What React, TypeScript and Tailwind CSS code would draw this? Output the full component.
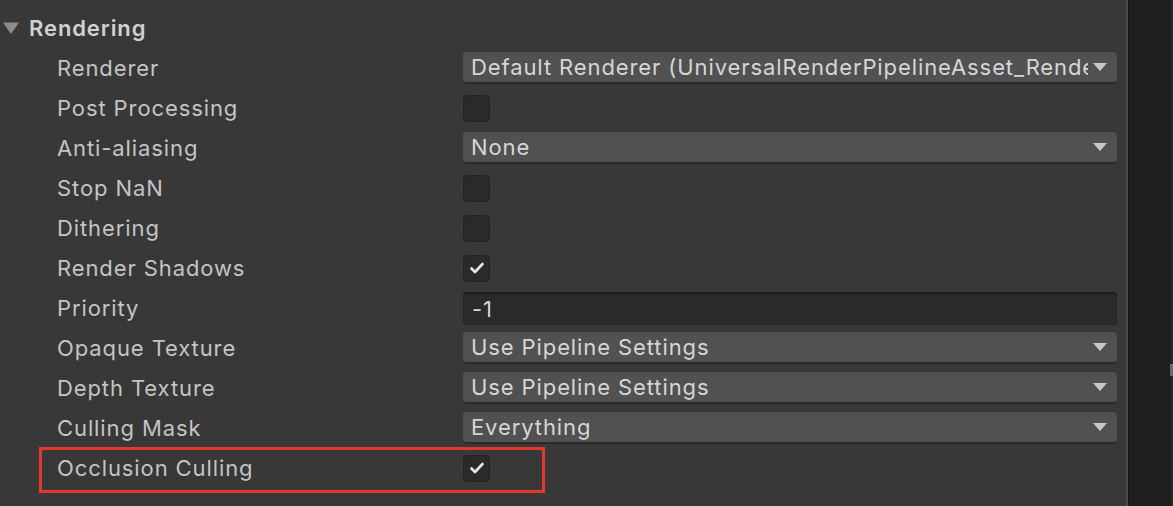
import React from "react";

const Check = () => (
  <svg width="16" height="14" viewBox="0 0 16 14" className="block">
    <path d="M2.5 7.5 L6 11 L13.5 3" fill="none" stroke="#e6e6e6" strokeWidth="2.6" strokeLinecap="round" strokeLinejoin="round" />
  </svg>
);

const Arrow = () => (
  <svg width="16" height="10" viewBox="0 0 16 10" className="block">
    <path d="M1 1 L15 1 L8 9 Z" fill="#c8c8c8" />
  </svg>
);

const Dropdown = ({ value }: { value: string }) => (
  <div className="flex h-[32px] w-full min-w-0 items-center rounded-[4px] bg-[#515151] border-b-2 border-[#2a2a2a] pl-[8px] pr-[9px]">
    <div className="min-w-0 flex-1 overflow-hidden whitespace-nowrap text-[#d6d6d6]">{value}</div>
    <div className="ml-[4px] shrink-0"><Arrow /></div>
  </div>
);

const Checkbox = ({ checked }: { checked?: boolean }) => (
  <div className="flex h-[27px] w-[27px] items-center justify-center rounded-[4px] border border-[#232323] bg-[#2a2a2a]">
    {checked ? <Check /> : null}
  </div>
);

const TextField = ({ value }: { value: string }) => (
  <div className="flex h-[33px] w-full items-center rounded-[4px] bg-[#2a2a2a] border-t-2 border-[#1c1c1c] border-x border-b border-x-[#242424] border-b-[#242424] pl-[8px] text-[#d6d6d6]">
    {value}
  </div>
);

type Row = { label: string; kind: "dd" | "cb" | "tf"; value?: string; checked?: boolean; highlight?: boolean };

const rows: Row[] = [
  { label: "Renderer", kind: "dd", value: "Default Renderer (UniversalRenderPipelineAsset_Renderer)" },
  { label: "Post Processing", kind: "cb" },
  { label: "Anti-aliasing", kind: "dd", value: "None" },
  { label: "Stop NaN", kind: "cb" },
  { label: "Dithering", kind: "cb" },
  { label: "Render Shadows", kind: "cb", checked: true },
  { label: "Priority", kind: "tf", value: "-1" },
  { label: "Opaque Texture", kind: "dd", value: "Use Pipeline Settings" },
  { label: "Depth Texture", kind: "dd", value: "Use Pipeline Settings" },
  { label: "Culling Mask", kind: "dd", value: "Everything" },
  { label: "Occlusion Culling", kind: "cb", checked: true, highlight: true },
];

export default function App() {
  return (
    <div
      className="flex h-[506px] w-[1173px] overflow-hidden bg-[#383838] text-[22px] leading-[26px] tracking-[0.9px]"
      style={{ fontFamily: "Inter, 'Noto Sans', sans-serif" }}
    >
      <div className="w-[1126px] shrink-0 pt-[8px] pr-[9px]">
        <div className="flex h-[40px] items-center">
          <svg width="18" height="14" viewBox="0 0 18 14" className="ml-[2px] mr-[9px] block">
            <path d="M1 1.5 L17 1.5 L9 13 Z" fill="#8c8c8c" />
          </svg>
          <span className="font-semibold text-[#d0d0d0]">Rendering</span>
        </div>
        {rows.map((r) => (
          <div key={r.label} className="relative flex h-[40px] items-center">
            {r.highlight ? (
              <div className="pointer-events-none absolute left-[39px] top-[-1px] h-[46px] w-[506px] border-[3px] border-[#e5372a]" />
            ) : null}
            <div className="w-[463px] shrink-0 pl-[57px] text-[#c4c4c4]">{r.label}</div>
            <div className="flex min-w-0 flex-1 items-center">
              {r.kind === "dd" ? <Dropdown value={r.value!} /> : null}
              {r.kind === "cb" ? <Checkbox checked={r.checked} /> : null}
              {r.kind === "tf" ? <TextField value={r.value!} /> : null}
            </div>
          </div>
        ))}
      </div>
      <div className="w-[2px] shrink-0 bg-[#4b4b4b]" />
      <div className="w-[1px] shrink-0 bg-[#141414]" />
      <div className="relative flex-1 bg-[#1f1f1f]">
        <div className="absolute right-0 top-0 h-full w-[2px] bg-[#2c2c2c]" />
        <div className="absolute right-0 top-[364px] h-[12px] w-[3px] bg-[#6a6a6a]" />
      </div>
    </div>
  );
}
